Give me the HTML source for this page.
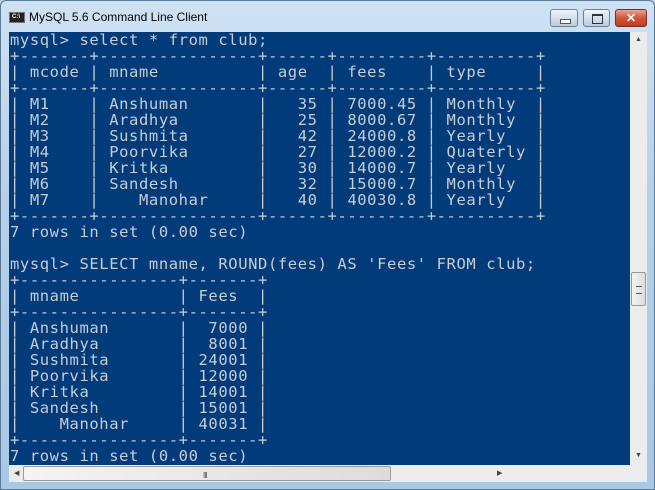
<!DOCTYPE html>
<html><head><meta charset="utf-8"><style>
html,body{margin:0;padding:0;width:655px;height:490px;overflow:hidden;background:#b9d3ea;font-family:"Liberation Sans",sans-serif}
.win{position:absolute;left:0;top:0;width:655px;height:490px;background:linear-gradient(#cfe2f4,#b5d0ea 40%,#a9c8e6);box-sizing:border-box;border:1px solid #5a7a98;border-radius:6px 6px 0 0}
.title{position:absolute;left:28px;top:9px;font-size:12px;color:#000}
.ico{position:absolute;left:8px;top:11px;width:16px;height:11px;background:#222;border:1px solid #777;box-sizing:border-box;color:#fff;font:bold 6px "Liberation Sans";line-height:9px;padding-left:2px}
.btn{position:absolute;top:8px;height:18px;border:1px solid #6b7f95;border-radius:3px;box-sizing:border-box;background:linear-gradient(#eef4fb,#d3e0ee 50%,#bccde0)}
.con{position:absolute;left:8px;top:31px;width:621px;height:433px;background:#023b7a;overflow:hidden}
pre{margin:0;padding:0 0 0 1px;font-family:"DejaVu Sans Mono","Liberation Mono",monospace;font-size:15.5px;letter-spacing:0.59px;line-height:16px;color:#c8ccd4;white-space:pre}
.vs{position:absolute;left:629px;top:31px;width:17px;height:433px;background:#ececec}
.hs{position:absolute;left:8px;top:464px;width:621px;height:17px;background:#ececec}
.thumb{position:absolute;background:linear-gradient(90deg,#f4f4f4,#dcdcdc);border:1px solid #9a9a9a;border-radius:2px;box-sizing:border-box}
.corner{position:absolute;left:629px;top:464px;width:17px;height:17px;background:#ececec}
</style></head><body>
<div class="win">
<div class="ico">C:\</div>
<div class="title">MySQL 5.6 Command Line Client</div>
<div class="btn" style="left:549px;width:28px"><div style="position:absolute;left:9px;top:9px;width:9px;height:3px;background:#fff;border:1px solid #555"></div></div>
<div class="btn" style="left:582px;width:27px"><div style="position:absolute;left:8px;top:4px;width:9px;height:7px;border:1px solid #333;border-top-width:2px"></div></div>
<div class="btn" style="left:614px;width:32px;background:linear-gradient(#e8a593,#d2553c 50%,#c23b22);border-color:#7a3020;color:#fff;font:bold 12px 'Liberation Sans';text-align:center;line-height:16px">✕</div>
<div class="con"><pre>mysql&gt; select * from club;
+-------+----------------+------+---------+----------+
| mcode | mname          | age  | fees    | type     |
+-------+----------------+------+---------+----------+
| M1    | Anshuman       |   35 | 7000.45 | Monthly  |
| M2    | Aradhya        |   25 | 8000.67 | Monthly  |
| M3    | Sushmita       |   42 | 24000.8 | Yearly   |
| M4    | Poorvika       |   27 | 12000.2 | Quaterly |
| M5    | Kritka         |   30 | 14000.7 | Yearly   |
| M6    | Sandesh        |   32 | 15000.7 | Monthly  |
| M7    |    Manohar     |   40 | 40030.8 | Yearly   |
+-------+----------------+------+---------+----------+
7 rows in set (0.00 sec)

mysql&gt; SELECT mname, ROUND(fees) AS 'Fees' FROM club;
+----------------+-------+
| mname          | Fees  |
+----------------+-------+
| Anshuman       |  7000 |
| Aradhya        |  8001 |
| Sushmita       | 24001 |
| Poorvika       | 12000 |
| Kritka         | 14001 |
| Sandesh        | 15001 |
|    Manohar     | 40031 |
+----------------+-------+
7 rows in set (0.00 sec)</pre></div>
<div class="vs">
<div style="position:absolute;left:5px;top:4px;font-size:7px;color:#444">▲</div>
<div class="thumb" style="left:1px;top:240px;width:15px;height:34px"><div style="position:absolute;left:4px;top:13px;width:6px;height:6px;border-top:1px solid #555;border-bottom:1px solid #555"></div></div>
<div style="position:absolute;left:5px;top:420px;font-size:7px;color:#444">▼</div>
</div>
<div class="hs">
<div style="position:absolute;left:5px;top:4px;font-size:7px;color:#444">◀</div>
<div class="thumb" style="left:14px;top:1px;width:368px;height:15px"><div style="position:absolute;left:179px;top:4px;font-size:8px;color:#555;letter-spacing:-1px">III</div></div>
<div style="position:absolute;left:488px;top:4px;font-size:7px;color:#444">▶</div>
</div>
<div class="corner"></div>
</div>
</body></html>
